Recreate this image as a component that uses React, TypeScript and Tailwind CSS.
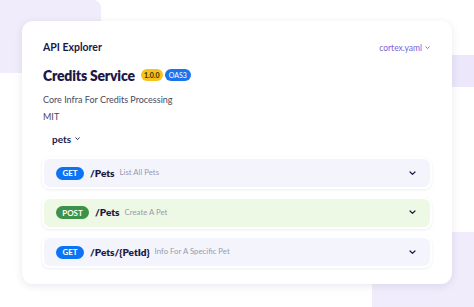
import React from "react";

const Chevron = ({ className = "" }: { className?: string }) => (
  <svg viewBox="0 0 10 6" className={className} fill="none" stroke="currentColor" strokeWidth="1.8" strokeLinecap="round" strokeLinejoin="round">
    <path d="M1.5 1.2 L5 4.6 L8.5 1.2" />
  </svg>
);

type Op = { method: "GET" | "POST"; path: string; desc: string };

const ops: Op[] = [
  { method: "GET", path: "/Pets", desc: "List All Pets" },
  { method: "POST", path: "/Pets", desc: "Create A Pet" },
  { method: "GET", path: "/Pets/{PetId}", desc: "Info For A Specific Pet" },
];

export default function App() {
  return (
    <div
      className="relative w-[474px] h-[307px] overflow-hidden bg-white"
      style={{ fontFamily: "Lato, 'Noto Sans', sans-serif" }}
    >
      <div className="absolute left-0 top-0 w-[101px] h-[73px] rounded-tr-[8px] bg-[#f0ecfb]" />
      <div className="absolute left-[440px] top-[55px] w-[40px] h-[32px] bg-[#ece7fa]" />
      <div className="absolute left-[372px] top-[232px] w-[110px] h-[80px] bg-[#f0ecfb]" />

      <div className="relative ml-[22px] mt-[21px] w-[430px] h-[263px] rounded-[11px] bg-white shadow-[0_2px_8px_rgba(40,30,90,0.10)] px-[20px] pt-[20px] flex flex-col text-[#1d1846]">
        <div className="h-[14px] flex items-center justify-between pl-[1px] pr-[2px]">
          <span className="text-[10.5px] font-bold">API Explorer</span>
          <span className="flex items-center gap-[3px] text-[8.5px] text-[#7b5fd6]">
            cortex.yaml
            <Chevron className="w-[5px] h-[3.5px]" />
          </span>
        </div>

        <div className="mt-[11px] h-[18px] flex items-center pl-[1px]">
          <span className="text-[14px] font-extrabold tracking-[-0.2px]">Credits Service</span>
          <span className="ml-[6px] h-[12px] w-[22px] rounded-full bg-[#f6c21c] text-[#3b2c00] text-[7px] font-bold flex items-center justify-center">1.0.0</span>
          <span className="ml-[2px] h-[12px] w-[26px] rounded-full bg-[#1b74ec] text-white text-[7px] flex items-center justify-center">OAS3</span>
        </div>

        <div className="mt-[9px] h-[14px] flex items-center pl-[1px] text-[9px] text-[#4a4860]">
          Core Infra For Credits Processing
        </div>
        <div className="mt-[3px] h-[14px] flex items-center pl-[1px] text-[9px] text-[#4a4860]">MIT</div>

        <div className="mt-[8px] h-[14px] flex items-center gap-[4px] pl-[10px] text-[10px] font-bold">
          pets
          <Chevron className="w-[5px] h-[3.5px]" />
        </div>

        <div className="mt-[11px] flex flex-col gap-[7.5px]">
          {ops.map((op, i) => (
            <div
              key={i}
              className={`h-[32px] rounded-[8px] border-2 border-white shadow-[0_1px_3px_rgba(40,30,90,0.08)] flex items-center pl-[12px] pr-[14px] ${
                op.method === "POST" ? "bg-[#edf9e4]" : "bg-[#f4f5fc]"
              }`}
            >
              <span
                className={`h-[13px] rounded-full text-white text-[8px] font-bold flex items-center justify-center ${
                  op.method === "POST" ? "w-[33px] bg-[#3d9149]" : "w-[28px] bg-[#0b73f4]"
                }`}
              >
                {op.method}
              </span>
              <span className="ml-[6px] text-[10px] font-extrabold text-[#1d1846]">{op.path}</span>
              <span className="ml-[5px] text-[7.8px] text-[#9a99ac]">{op.desc}</span>
              <Chevron className="ml-auto w-[7px] h-[4.5px] text-[#1d1846]" />
            </div>
          ))}
        </div>
      </div>
    </div>
  );
}
